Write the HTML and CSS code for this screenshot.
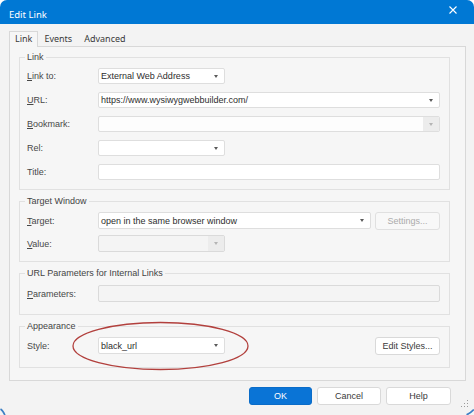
FILE: index.html
```html
<!DOCTYPE html>
<html>
<head>
<meta charset="utf-8">
<link rel="stylesheet" href="styles.css">
</head>
<body>
<div class="dialog">
  <div class="titlebar">
    <span class="title">Edit Link</span>
    <svg class="close" width="8" height="8" viewBox="0 0 8 8"><path d="M0.5 0.5 L7.5 7.5 M7.5 0.5 L0.5 7.5" stroke="#fff" stroke-width="1.1" fill="none"/></svg>
  </div>
  <div class="content">
    <div class="tabs">
      <span class="tab active">Link</span>
      <span class="tab">Events</span>
      <span class="tab">Advanced</span>
    </div>
    <div class="panel">
      <fieldset class="group g-link">
        <legend>Link</legend>
        <div class="row"><label><u>L</u>ink to:</label><div class="field combo short"><span>External Web Address</span><i class="arrow"></i></div></div>
        <div class="row"><label><u>U</u>RL:</label><div class="field combo"><span>https://www.wysiwygwebbuilder.com/</span><i class="arrow"></i></div></div>
        <div class="row"><label><u>B</u>ookmark:</label><div class="field combo dis-light"><span></span><i class="dbtn"><i class="arrow light"></i></i></div></div>
        <div class="row"><label>Rel:</label><div class="field combo short"><span></span><i class="arrow"></i></div></div>
        <div class="row"><label>Title:</label><div class="field"><span></span></div></div>
      </fieldset>
      <fieldset class="group g-target">
        <legend>Target Window</legend>
        <div class="row tall"><label><u>T</u>arget:</label><div class="field combo"><span>open in the same browser window</span><i class="arrow"></i></div><button class="btn side disabled">Settings...</button></div>
        <div class="row tall"><label><u>V</u>alue:</label><div class="field combo short disabled"><span></span><i class="dbtn"><i class="arrow light"></i></i></div></div>
      </fieldset>
      <fieldset class="group g-params">
        <legend>URL Parameters for Internal Links</legend>
        <div class="row tall"><label><u>P</u>arameters:</label><div class="field disabled"><span></span></div></div>
      </fieldset>
      <fieldset class="group g-appear">
        <legend>Appearance</legend>
        <div class="row tall"><label>Style:</label><div class="field combo short"><span>black_url</span><i class="arrow"></i></div><button class="btn side push">Edit Styles...</button></div>
      </fieldset>
    </div>
    <div class="buttons">
      <button class="btn foot primary w63">OK</button>
      <button class="btn foot w64">Cancel</button>
      <button class="btn foot w65">Help</button>
    </div>
  </div>
  <svg class="ellipse" width="180" height="52" viewBox="0 0 180 52"><ellipse cx="88.5" cy="25" rx="87.5" ry="23.5" fill="none" stroke="#b2403d" stroke-width="1.3"/></svg>
  <svg class="grip" width="8" height="8" viewBox="0 0 8 8">
    <rect x="6" y="0" width="1" height="1" fill="#9a9a9a"/>
    <rect x="3" y="3" width="1" height="1" fill="#9a9a9a"/>
    <rect x="6" y="3" width="1" height="1" fill="#9a9a9a"/>
    <rect x="0" y="6" width="1" height="1" fill="#9a9a9a"/>
    <rect x="3" y="6" width="1" height="1" fill="#9a9a9a"/>
    <rect x="6" y="6" width="1" height="1" fill="#9a9a9a"/>
  </svg>
  <svg class="corner-l" width="8" height="8" viewBox="0 0 8 8"><path d="M0.5 1 Q3 2.5 5 7.5" stroke="#3c7fc4" stroke-width="1.6" fill="none"/></svg>
  <svg class="corner-r" width="8" height="6" viewBox="0 0 8 6"><path d="M0.5 5.8 Q4 4.5 7.8 0.5" stroke="#3c7fc4" stroke-width="1.6" fill="none"/></svg>
</div>
</body>
</html>
```

FILE: styles.css
```css
html, body {
  margin: 0;
  padding: 0;
  background: #ffffff;
}

.dialog {
  position: relative;
  width: 474px;
  height: 415px;
  background: #f3f3f3;
  overflow: hidden;
  border-radius: 7px 7px 0 0;
  font-family: "Liberation Sans", Arial, sans-serif;
  font-size: 9px;
  color: #333333;
}

.titlebar {
  height: 24px;
  background: #0078d4;
  display: flex;
  justify-content: space-between;
  align-items: flex-start;
  color: #ffffff;
}

.title {
  font-family: "Noto Sans", sans-serif;
  font-size: 9.5px;
  line-height: 12px;
  margin: 9px 0 0 9px;
}

.close {
  display: block;
  margin: 6px 17px 0 0;
}

.content {
  padding: 7px 8px 0 9px;
}

.tabs {
  display: flex;
  align-items: flex-start;
  height: 15px;
  position: relative;
  z-index: 1;
}

.tab {
  box-sizing: border-box;
  height: 15px;
  padding: 0 5px;
  border: 1px solid transparent;
  border-bottom: none;
  line-height: 14px;
  font-family: "Noto Sans", sans-serif;
  font-size: 9px;
  color: #3a3a3a;
}

.tab.active {
  height: 16px;
  border-color: #d8d8d8;
  background: #f6f6f6;
}

.panel {
  border: 1px solid #d8d8d8;
  background: #f6f6f6;
  padding: 4px 15px 12px 9px;
}

.group {
  margin: 0;
  min-width: 0;
  border: 1px solid #e1e1e1;
  padding: 5px 9px 9px 7px;
}

.group + .group {
  margin-top: 5px;
}

.g-params {
  padding-top: 6px;
  padding-bottom: 12px;
}

.g-appear {
  padding-bottom: 13px;
}

legend {
  padding: 0 2px;
  margin-left: -2px;
  line-height: 12px;
  font-size: 9px;
  color: #444444;
}

.row {
  display: flex;
  align-items: center;
  height: 16px;
}

.row + .row {
  margin-top: 8px;
}

.row.tall {
  height: 17px;
}

.row.tall + .row.tall {
  margin-top: 6px;
}

.row label {
  flex: none;
  width: 71px;
  color: #484848;
}

.field {
  flex: 1;
  min-width: 0;
  box-sizing: border-box;
  height: 100%;
  display: flex;
  align-items: center;
  border: 1px solid #dedede;
  border-radius: 2px;
  background: #ffffff;
  padding-left: 2px;
  color: #2e2e2e;
  white-space: nowrap;
  overflow: hidden;
}

.field.short {
  flex: none;
  width: 127px;
}

.field.disabled {
  background: #f4f4f4;
  border-color: #dadada;
}

.field.dis-light {
  background: #fdfdfd;
}

.arrow {
  display: block;
  width: 0;
  height: 0;
  margin-left: auto;
  margin-right: 6px;
  border-left: 2.5px solid transparent;
  border-right: 2.5px solid transparent;
  border-top: 3px solid #5a5a5a;
}

.arrow.light {
  margin: 0;
  border-top-color: #b4b4b4;
}

.dbtn {
  margin-left: auto;
  width: 16px;
  height: 100%;
  background: #ececec;
  display: flex;
  align-items: center;
  justify-content: center;
}

.btn {
  box-sizing: border-box;
  height: 18px;
  padding: 0;
  border: 1px solid #d9d9d9;
  border-radius: 3px;
  background: #ffffff;
  font-family: "Liberation Sans", Arial, sans-serif;
  font-size: 9px;
  color: #3a3a3a;
}

.btn.side {
  flex: none;
  width: 65px;
  margin-left: 4px;
}

.btn.push {
  margin-left: auto;
}

.btn.disabled {
  background: #f8f8f8;
  border-color: #e0e0e0;
  color: #ababab;
}

.buttons {
  display: flex;
  justify-content: flex-end;
  gap: 5px;
  margin-top: 6px;
  padding-right: 15px;
}

.btn.foot {
  height: 18px;
}

.btn.primary {
  background: #0a74d6;
  border-color: #0a6cc8;
  color: #ffffff;
}

.w63 { width: 63px; }
.w64 { width: 64px; }
.w65 { width: 65px; }

.ellipse {
  position: absolute;
  left: 72px;
  top: 321px;
}

.grip {
  position: absolute;
  left: 461px;
  top: 400px;
}

.corner-l {
  position: absolute;
  left: 0;
  top: 408px;
}

.corner-r {
  position: absolute;
  left: 466px;
  top: 409px;
}
```
